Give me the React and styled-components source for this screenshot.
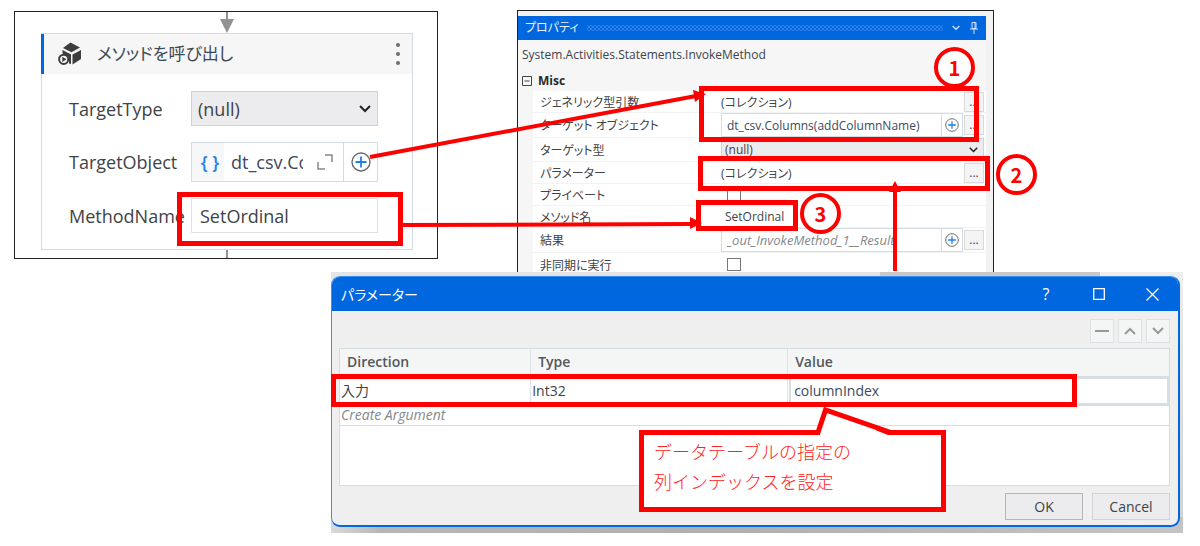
import React from "react";
import styled, { createGlobalStyle, css } from "styled-components";

const RED = "#ff0000";
const BLUE = "#0067df";

const GlobalStyle = createGlobalStyle`
  * {
    box-sizing: border-box;
  }
  body {
    margin: 0;
    background: #fff;
    color: #404347;
    font-family: "Open Sans", "Noto Sans CJK JP", sans-serif;
    font-feature-settings: "palt";
  }
  button, input, select {
    margin: 0;
    padding: 0;
    color: inherit;
    font: inherit;
    font-feature-settings: inherit;
  }
`;

const Page = styled.main`
  position: relative;
  padding: 10px 0 13px;
`;

const Panels = styled.div`
  display: grid;
  grid-template-columns: 424fr 477fr;
  column-gap: 79px;
  align-items: start;
  padding: 0 206px 0 14px;
`;

/* annotations */

const Frame = styled.div`
  position: absolute;
  z-index: 2;
  top: ${(p) => p.$top}px;
  left: ${(p) => p.$left}px;
  right: ${(p) => p.$right}px;
  height: ${(p) => p.$height}px;
  border: 5px solid ${RED};
  pointer-events: none;
`;

const Badge = styled.span`
  position: absolute;
  z-index: 3;
  top: ${(p) => p.$top}px;
  right: ${(p) => p.$right}px;
  display: grid;
  place-items: center;
  width: 41px;
  height: 41px;
  border: 4px solid ${RED};
  border-radius: 50%;
  background: #fff;
  color: ${RED};
  font-family: "Noto Sans CJK JP", sans-serif;
  font-size: 20px;
  font-weight: 700;
  line-height: 24px;
`;

const Arrows = styled.svg`
  position: absolute;
  z-index: 2;
  top: 0;
  left: 0;
  width: 100%;
  height: 546px;
  pointer-events: none;
`;

const Callout = styled.div`
  position: absolute;
  z-index: 3;
  top: 158px;
  left: 308px;
  width: 307px;
  height: 82px;
  padding: 2px 10px;
  border: 5px solid ${RED};
  background: #fff;
  color: #ff2020;
  font-size: 18px;
  font-weight: 300;
  line-height: 30px;

  p {
    margin: 0;
    font-feature-settings: normal;
  }
  svg {
    position: absolute;
    top: -30px;
    left: 165px;
  }
`;

/* workflow designer */

const Designer = styled.section`
  position: relative;
  display: flex;
  flex-direction: column;
  align-items: center;
  margin-top: 1px;
  padding: 0 24px 0 26px;
  border: 1px solid #222;
  background: #fff;
`;

const Connector = styled.svg`
  display: block;
`;

const Activity = styled.div`
  width: 100%;
  border: 1px solid #d3dce2;
  background: #fff;
`;

const ActivityHeader = styled.header`
  display: flex;
  align-items: center;
  height: 40px;
  margin-left: -1px;
  padding: 0 6px 0 14px;
  border-left: 3px solid ${BLUE};
  background: #f6f6f6;

  h2 {
    flex: 1;
    margin: 0 0 0 15px;
    color: #3c4955;
    font-size: 17px;
    font-weight: 400;
    line-height: 24px;
  }
`;

const IconButton = styled.button`
  display: grid;
  place-items: center;
  width: ${(p) => p.$width || 16}px;
  height: 24px;
  border: 0;
  background: none;
`;

const ActivityBody = styled.div`
  display: grid;
  grid-template-columns: 122px 1fr;
  align-items: center;
  row-gap: 16px;
  padding: 17px 34px 16px 27px;
  font-size: 18px;
  line-height: 24px;
`;

const boxed = css`
  border: 1px solid #d3dce2;
  background: #fff;
`;

const TextBox = styled.input`
  width: 100%;
  height: 35px;
  padding: 0 8px;
  border: 1px solid #dfe2e5;
  background: #fff;
  border-radius: 0;
`;

const SelectWrap = styled.div`
  position: relative;
  height: ${(p) => p.$height}px;

  select {
    width: 100%;
    height: 100%;
    padding: 0 ${(p) => p.$inset}px;
    border: 1px solid #cfd2d5;
    border-radius: 0;
    background: #ececee;
    appearance: none;
  }
  svg {
    position: absolute;
    top: calc(50% - 4px);
    right: 6px;
    pointer-events: none;
  }
`;

const ObjectField = styled.div`
  ${boxed}
  display: flex;
  align-items: stretch;
  height: 40px;
  min-width: 0;
`;

const Braces = styled.span`
  display: grid;
  place-items: center;
  width: 32px;
  padding-left: 4px;
  background: #f6f7f8;
  color: #1a80f0;
  font-weight: 600;
`;

const ObjectInput = styled.input`
  flex: 1;
  width: 0;
  padding-left: 7px;
  border: 0;
  background: none;
  color: #3c4960;
`;

const ExpandButton = styled(IconButton)`
  align-self: center;
  margin: 0 10px 0 14px;
`;

const PlusButton = styled.button`
  display: grid;
  place-items: center;
  width: ${(p) => p.$width}px;
  border: 0;
  border-left: 1px solid #d3dce2;
  background: #fff;
`;

/* properties panel */

const Properties = styled.section`
  position: relative;
  padding: 5px 7px 0 0;
  border: solid #222;
  border-width: 1px 1px 0;
  background: #f2f2f3;
  font-size: 12px;
  line-height: 18px;
`;

const PropertiesTitle = styled.header`
  display: flex;
  align-items: center;
  height: 24px;
  padding: 0 3px 0 7px;
  background: ${BLUE};
  color: #e8f1fd;

  h2 {
    margin: 0;
    font-size: 12px;
    font-weight: 400;
  }
`;

const Grip = styled.span`
  flex: 1;
  height: 6px;
  margin: 0 4px 0 8px;
  background-image: radial-gradient(#3284e8 1px, transparent 1px),
    radial-gradient(#3284e8 1px, transparent 1px);
  background-size: 4px 4px;
  background-position: 0 0, 2px 2px;
`;

const TypeName = styled.p`
  height: 30px;
  margin: 0;
  padding-left: 4px;
  background: #f6f6f7;
  line-height: 30px;
`;

const Category = styled.h3`
  display: flex;
  align-items: center;
  gap: 6px;
  height: 21px;
  margin: 0;
  padding-left: 4px;
  background: #f6f6f7;
  color: #2a2a2a;
  font-size: 12px;
`;

const PropertyList = styled.div`
  padding-left: 15px;
  background: #f6f6f7;
`;

const PropertyRow = styled.div`
  display: grid;
  grid-template-columns: 188px 1fr;
  align-items: center;
  height: ${(p) => p.$height || 22}px;
  overflow: hidden;
  border-bottom: 1px solid #f2f3f4;
  background: #fff;
`;

const PropertyLabel = styled.label`
  padding: 2px 0 0 7px;
`;

const PropertyValue = styled.div`
  display: flex;
  align-items: center;
  gap: 1px;
  height: 100%;
  padding-right: 2px;

  > ${SelectWrap} {
    flex: 1;
  }
`;

const ValueInput = styled.input`
  flex: 1;
  width: 0;
  height: 100%;
  padding-left: ${(p) => p.$inset || 0}px;
  border: 0;
  background: none;
`;

const Expression = styled.div`
  ${boxed}
  display: flex;
  flex: 1;
  height: 100%;
  color: ${(p) => (p.$muted ? "#85888c" : "#3c4960")};
  font-style: ${(p) => (p.$muted ? "italic" : "normal")};
  font-size: ${(p) => (p.$muted ? 13 : 12)}px;
`;

const MoreButton = styled.button`
  width: 20px;
  height: 20px;
  border: 1px solid #d8dadc;
  background: #f4f4f5;
  line-height: 16px;
`;

const CheckBox = styled.input`
  width: 14px;
  height: 13px;
  margin-left: 6px;
  border: 1px solid #777;
  background: #fff;
  appearance: none;
`;

/* parameter dialog, covers the end of the property list */

const Backdrop = styled.section`
  position: relative;
  margin: -5px 17px 0 331px;
  padding: 4px 3px 6px 0;
  background:
    linear-gradient(90deg, #e4e4e4 549px, #c8c8c8 549px, #c8c8c8 769px, #eee 769px) top / 100% 14px no-repeat,
    linear-gradient(90deg, #dadada 0, #b6b6b6 50px, #b0b0b0 400px, #c4c4c4 100%) bottom / 100% 16px no-repeat,
    linear-gradient(#ececec, #d0d0d0);
`;

const Dialog = styled.div`
  overflow: hidden;
  border: 1px solid #3b8ef0;
  border-right: 2px solid ${BLUE};
  border-bottom: 2px solid ${BLUE};
  border-radius: 9px;
  background: #efefef;
`;

const DialogTitle = styled.header`
  display: flex;
  align-items: center;
  height: 34px;
  padding: 0 10px 0 9px;
  background: ${BLUE};
  color: #fff;

  h2 {
    flex: 1;
    margin: 0;
    font-size: 14px;
    font-weight: 400;
  }
`;

const TitleButtons = styled.div`
  display: flex;
  gap: 21px;
`;

const Toolbar = styled.div`
  display: flex;
  justify-content: flex-end;
  gap: 4px;
  padding: 8px 8px 5px;
`;

const ToolButton = styled.button`
  display: grid;
  place-items: center;
  width: 24px;
  height: 24px;
  border: 1px solid #dfe0e1;
  background: #f4f5f5;
`;

const TableBox = styled.div`
  height: 138px;
  margin: 0 8px 0 7px;
  border: 1px solid #d6dde1;
  background: #fff;
`;

const ArgumentTable = styled.table`
  width: 100%;
  border-collapse: collapse;
  table-layout: fixed;
  font-size: 14px;
  line-height: 20px;

  th {
    height: 27px;
    padding: 0 7px;
    border-right: 1px solid #dde3e6;
    border-bottom: 1px solid #d6dde1;
    background: #f4f6f5;
    color: #55585b;
    font-weight: 600;
    text-align: left;
  }
  td {
    height: 29px;
    padding: 0 0 0 1px;
    border-right: 1px solid #dde3e6;
  }
  tr > :last-child {
    border-right: 0;
  }
  tr:last-child td {
    height: 20px;
    border-top: 1px solid #d6dde1;
    border-bottom: 1px solid #d6dde1;
    color: #85888c;
    font-style: italic;
    line-height: 18px;
  }
`;

const ValueCell = styled.input`
  display: block;
  width: 100%;
  height: 28px;
  padding: 0 3px;
  border: 2px solid #d6dfe3;
  border-radius: 0;
  color: #3c4960;
`;

const DialogFooter = styled.footer`
  display: flex;
  justify-content: flex-end;
  gap: 9px;
  padding: 7px 8px 5px;
`;

const DialogButton = styled.button`
  width: 78px;
  height: 27px;
  border: 1px solid ${(p) => (p.$primary ? "#b4b6b8" : "#d2d4d6")};
  background: #ececee;
  font-size: 14px;
  line-height: 20px;
`;

const Chevron = ({ up, width = 12, stroke = 2, color = "#222" }) => (
  <svg width={width} height="8" viewBox="0 0 12 8" fill="none">
    <path d={up ? "M1 7l5-5 5 5" : "M1 1l5 5 5-5"} stroke={color} strokeWidth={stroke} />
  </svg>
);

const Plus = ({ size }) => (
  <svg width={size} height={size} viewBox="0 0 20 20" fill="none">
    <circle cx="10" cy="10" r="9" stroke="#666a6e" strokeWidth="1.4" />
    <path d="M10 4.500v11M4.500 10h11" stroke="#1a80f0" strokeWidth="1.800" />
  </svg>
);

const InvokeIcon = () => (
  <svg width="24" height="24" viewBox="0 0 24 24" fill="#3d3d3d">
    <path d="M12.500 .5L22 5.500 13.500 10.300 5 6z" />
    <path d="M23 8v9l-8.500 5.500V12.500z" />
    <path d="M4.500 8l8.500 4.500V22l-2-.6V15L4.500 11.500z" />
    <circle cx="5.700" cy="17.300" r="4.600" fill="#f6f6f6" stroke="#3d3d3d" strokeWidth="2" />
    <path d="M4.300 14.700v5.200l4.200-2.600z" />
  </svg>
);

const ExpressionField = ({ id, value, muted }) => (
  <Expression $muted={muted}>
    <ValueInput id={id} defaultValue={value} $inset={5} />
    <PlusButton $width={21} aria-label="plus">
      <Plus size={14} />
    </PlusButton>
  </Expression>
);

const App = () => {
  return (
    <Page>
      <GlobalStyle />
      <Panels>
        <Designer>
          <Connector width="14" height="21" viewBox="0 0 14 21">
            <path d="M6 0h2v7h6L7 21 0 7h6z" fill="#929292" />
          </Connector>
          <Activity>
            <ActivityHeader>
              <InvokeIcon />
              <h2>メソッドを呼び出し</h2>
              <IconButton aria-label="menu">
                <svg width="4" height="22" fill="#6b6e71">
                  <circle cx="2" cy="2" r="2" />
                  <circle cx="2" cy="11" r="2" />
                  <circle cx="2" cy="20" r="2" />
                </svg>
              </IconButton>
            </ActivityHeader>
            <ActivityBody>
              <label htmlFor="targetType">TargetType</label>
              <SelectWrap $height={35} $inset={6}>
                <select id="targetType">
                  <option>(null)</option>
                </select>
                <Chevron width={14} />
              </SelectWrap>
              <label htmlFor="targetObject">TargetObject</label>
              <ObjectField>
                <Braces>{"{ }"}</Braces>
                <ObjectInput id="targetObject" defaultValue="dt_csv.Columns(addColumnName)" />
                <ExpandButton aria-label="expand">
                  <svg width="16" height="16" viewBox="0 0 16 16" fill="none" stroke="#85888c" strokeWidth="1.500">
                    <path d="M8 1h7v7M1 8v7h7" />
                  </svg>
                </ExpandButton>
                <PlusButton $width={34} aria-label="plus">
                  <Plus size={20} />
                </PlusButton>
              </ObjectField>
              <label htmlFor="methodName">MethodName</label>
              <TextBox id="methodName" defaultValue="SetOrdinal" />
            </ActivityBody>
          </Activity>
          <Connector width="2" height="8">
            <path d="M0 0h2v8H0z" fill="#929292" />
          </Connector>
          <Frame $top={180} $left={162} $right={34} $height={54} />
        </Designer>

        <Properties>
          <PropertiesTitle>
            <h2>プロパティ</h2>
            <Grip />
            <IconButton $width={18} aria-label="collapse">
              <Chevron width={8} stroke={2} color="#cfe2fa" />
            </IconButton>
            <IconButton $width={18} aria-label="pin">
              <svg width="8" height="12" viewBox="0 0 8 12" fill="none" stroke="#cfe2fa">
                <path d="M2 .5h4v6H2zM5 .5v6M0 7h8M4 7v5" />
              </svg>
            </IconButton>
          </PropertiesTitle>
          <TypeName>System.Activities.Statements.InvokeMethod</TypeName>
          <Category>
            <svg width="10" height="10" fill="none" stroke="#444">
              <path d="M.5 .5h9v9h-9zM2.500 5h5" />
            </svg>
            Misc
          </Category>
          <PropertyList>
            <PropertyRow>
              <PropertyLabel htmlFor="generics">ジェネリック型引数</PropertyLabel>
              <PropertyValue>
                <ValueInput id="generics" defaultValue="(コレクション)" />
                <MoreButton>...</MoreButton>
              </PropertyValue>
            </PropertyRow>
            <PropertyRow $height={25}>
              <PropertyLabel htmlFor="target">ターゲット オブジェクト</PropertyLabel>
              <PropertyValue>
                <ExpressionField id="target" value="dt_csv.Columns(addColumnName)" />
                <MoreButton>...</MoreButton>
              </PropertyValue>
            </PropertyRow>
            <PropertyRow $height={24}>
              <PropertyLabel htmlFor="type">ターゲット型</PropertyLabel>
              <PropertyValue>
                <SelectWrap $height={23} $inset={3}>
                  <select id="type">
                    <option>(null)</option>
                  </select>
                  <Chevron width={9} />
                </SelectWrap>
              </PropertyValue>
            </PropertyRow>
            <PropertyRow>
              <PropertyLabel htmlFor="parameters">パラメーター</PropertyLabel>
              <PropertyValue>
                <ValueInput id="parameters" defaultValue="(コレクション)" />
                <MoreButton>...</MoreButton>
              </PropertyValue>
            </PropertyRow>
            <PropertyRow>
              <PropertyLabel htmlFor="private">プライベート</PropertyLabel>
              <PropertyValue>
                <CheckBox type="checkbox" id="private" />
              </PropertyValue>
            </PropertyRow>
            <PropertyRow>
              <PropertyLabel htmlFor="method">メソッド名</PropertyLabel>
              <PropertyValue>
                <ValueInput id="method" defaultValue="SetOrdinal" $inset={4} />
              </PropertyValue>
            </PropertyRow>
            <PropertyRow $height={25}>
              <PropertyLabel htmlFor="result">結果</PropertyLabel>
              <PropertyValue>
                <ExpressionField id="result" value="_out_InvokeMethod_1__Result" muted />
                <MoreButton>...</MoreButton>
              </PropertyValue>
            </PropertyRow>
            <PropertyRow $height={24}>
              <PropertyLabel htmlFor="async">非同期に実行</PropertyLabel>
              <PropertyValue>
                <CheckBox type="checkbox" id="async" />
              </PropertyValue>
            </PropertyRow>
          </PropertyList>
          <Frame $top={75} $left={181} $right={14} $height={56} />
          <Frame $top={145} $left={180} $right={3} $height={35} />
          <Frame $top={189} $left={178} $right={195} $height={31} />
          <Badge $top={36} $right={18}>1</Badge>
          <Badge $top={143} $right={-44}>2</Badge>
          <Badge $top={182} $right={152}>3</Badge>
        </Properties>
      </Panels>

      <Backdrop>
        <Dialog>
          <DialogTitle>
            <h2>パラメーター</h2>
            <TitleButtons>
              <IconButton $width={32} aria-label="help">
                ?
              </IconButton>
              <IconButton $width={32} aria-label="maximize">
                <svg width="12" height="12" fill="none" stroke="#fff" strokeWidth="1.300">
                  <path d="M.7 .7h10.600v10.600H.7z" />
                </svg>
              </IconButton>
              <IconButton $width={32} aria-label="close">
                <svg width="13" height="13" stroke="#fff" strokeWidth="1.300">
                  <path d="M.5 .5l12 12M12.500 .5l-12 12" />
                </svg>
              </IconButton>
            </TitleButtons>
          </DialogTitle>
          <Toolbar>
            <ToolButton aria-label="remove">
              <svg width="14" height="2">
                <path d="M0 1h14" stroke="#999" strokeWidth="2" />
              </svg>
            </ToolButton>
            <ToolButton aria-label="up">
              <Chevron up color="#999" />
            </ToolButton>
            <ToolButton aria-label="down">
              <Chevron color="#999" />
            </ToolButton>
          </Toolbar>
          <TableBox>
            <ArgumentTable>
              <colgroup>
                <col style={{ width: "23%" }} />
                <col style={{ width: "31%" }} />
                <col />
              </colgroup>
              <thead>
                <tr>
                  <th>Direction</th>
                  <th>Type</th>
                  <th>Value</th>
                </tr>
              </thead>
              <tbody>
                <tr>
                  <td>入力</td>
                  <td>Int32</td>
                  <td>
                    <ValueCell aria-label="Value" defaultValue="columnIndex" />
                  </td>
                </tr>
                <tr>
                  <td colSpan={3}>Create Argument</td>
                </tr>
              </tbody>
            </ArgumentTable>
          </TableBox>
          <DialogFooter>
            <DialogButton $primary>OK</DialogButton>
            <DialogButton>Cancel</DialogButton>
          </DialogFooter>
        </Dialog>
        <Frame $top={102} $left={0} $right={106} $height={33} />
        <Callout>
          <p>データテーブルの指定の</p>
          <p>列インデックスを設定</p>
          <svg width="90" height="32" viewBox="0 0 90 32">
            <path d="M8 32L16 5L84 32z" fill="#fff" />
            <path d="M0 27.500H9L16.500 5L82 27.500H90" fill="none" stroke={RED} strokeWidth="5" />
          </svg>
        </Callout>
      </Backdrop>

      <Arrows viewBox="0 0 1200 546" preserveAspectRatio="none">
        <g stroke={RED} strokeWidth="4">
          <path d="M370 157L696 96" />
          <path d="M402 225L692 224" />
          <path d="M895 271V190" />
        </g>
        <g fill={RED}>
          <path d="M706 94L693 90L695 102z" />
          <path d="M702 223L690 217V229z" />
          <path d="M895 181L889 192H901z" />
        </g>
      </Arrows>
    </Page>
  );
};

export default App;
